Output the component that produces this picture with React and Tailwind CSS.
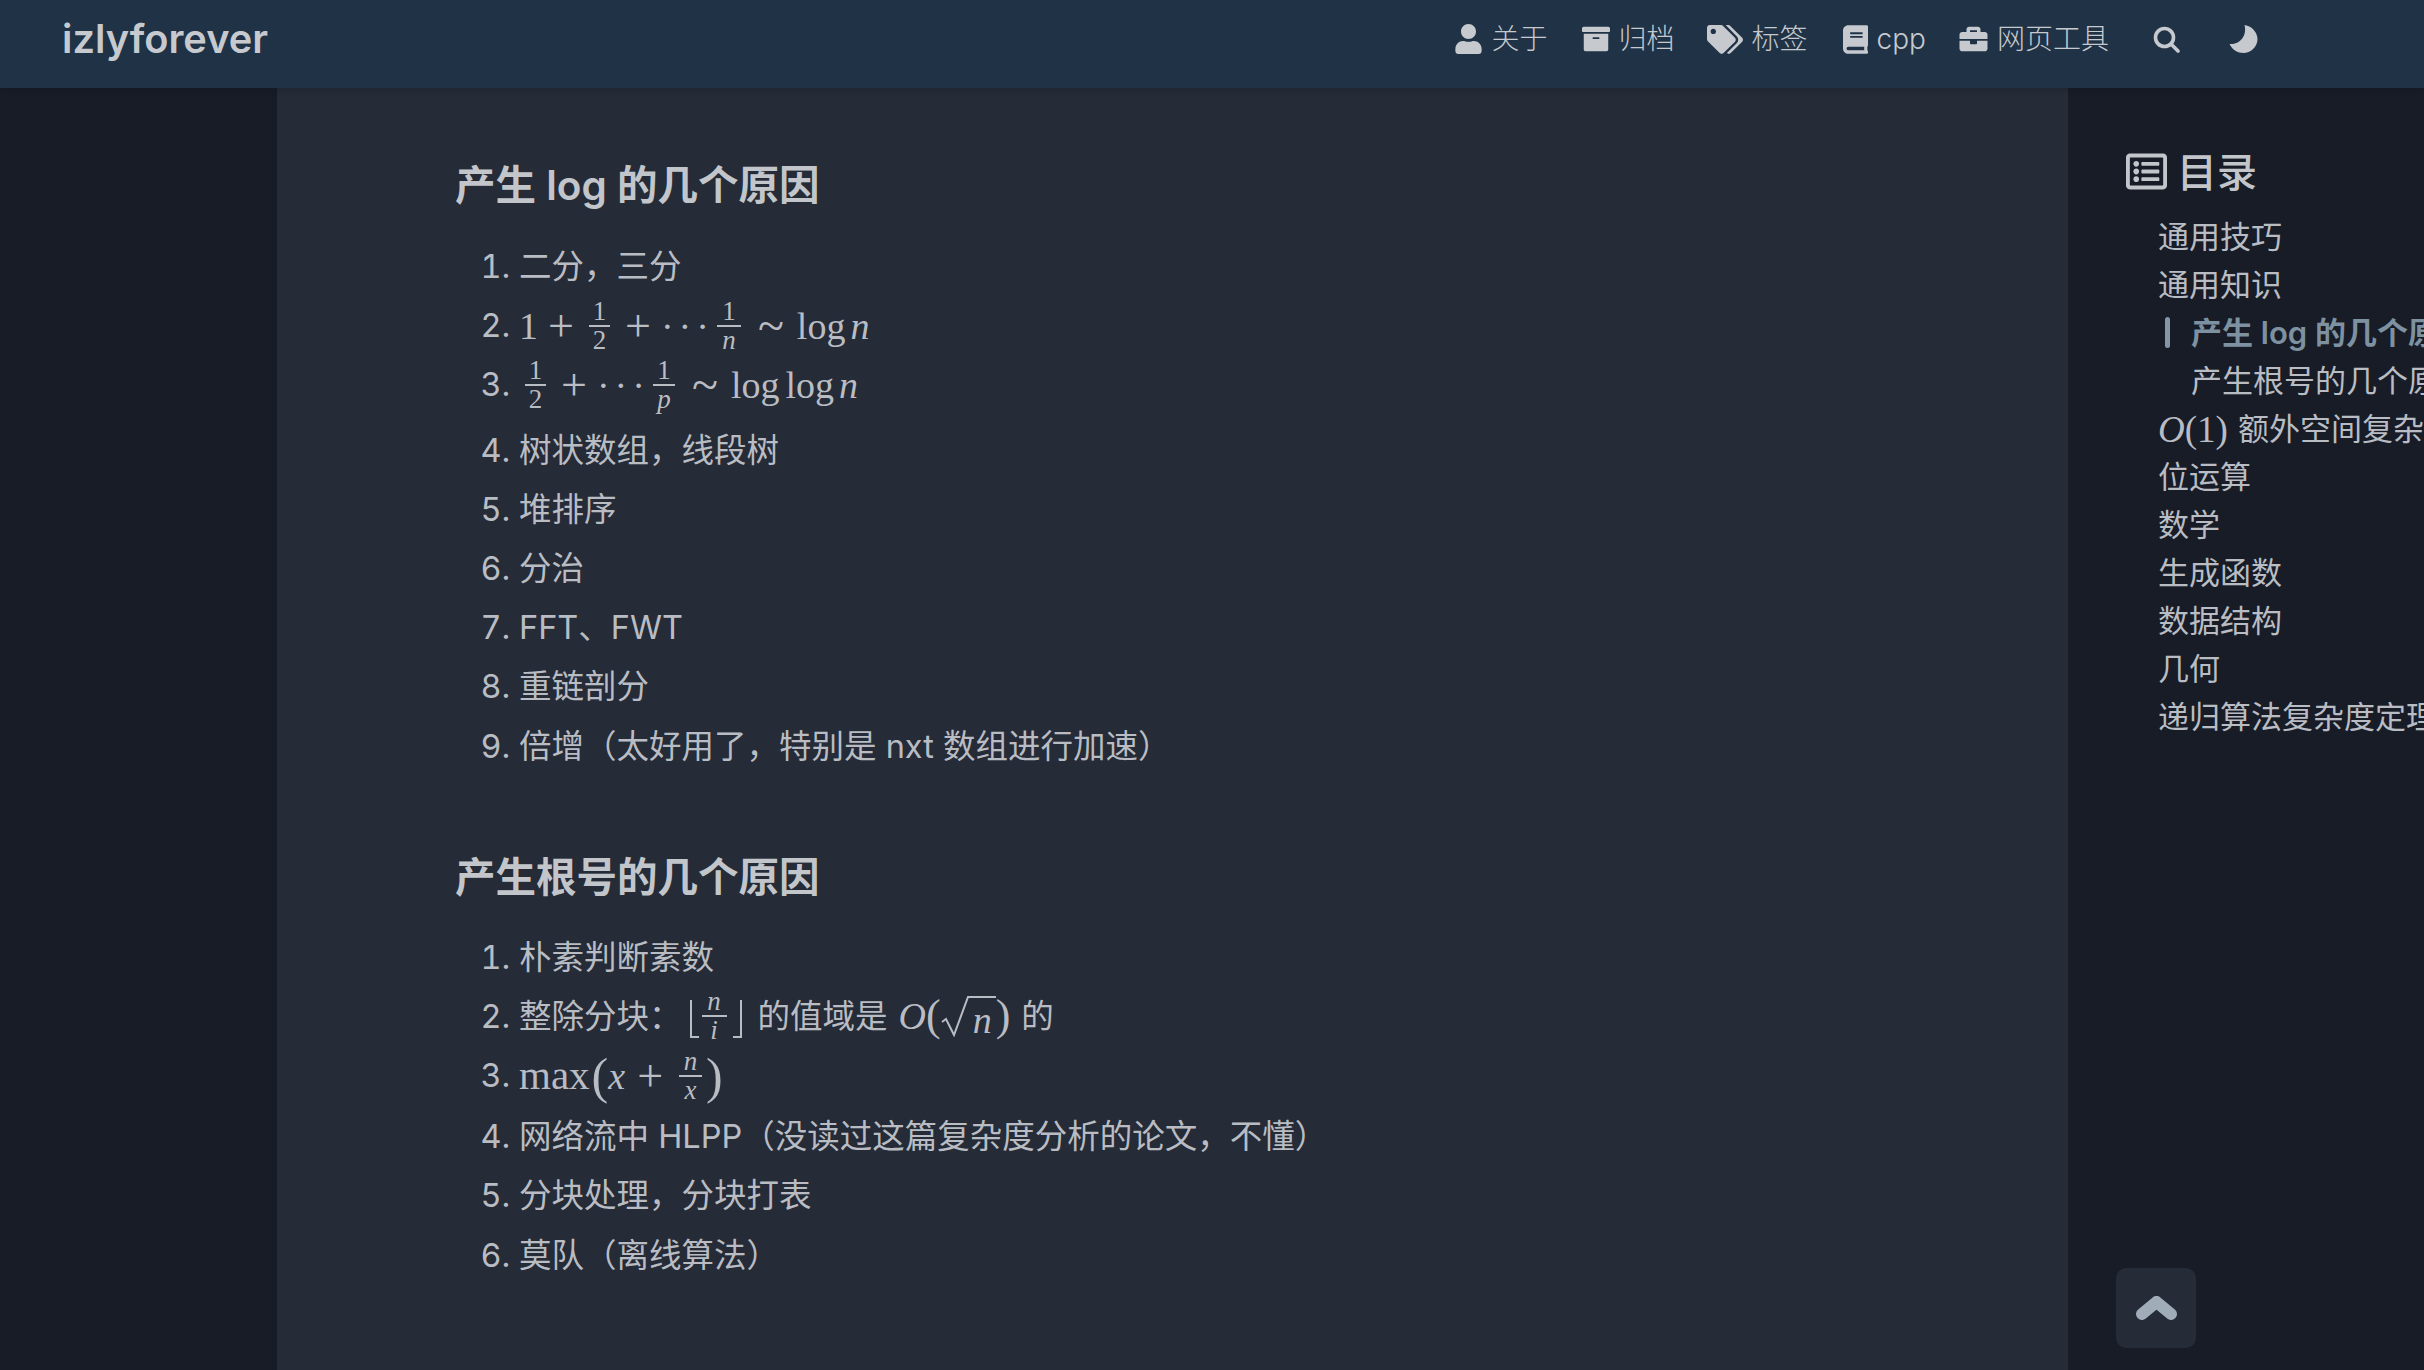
import React from "react";
import { FaUser, FaArchive, FaTags, FaBook, FaBriefcase, FaRegListAlt } from "react-icons/fa";

const SERIF = "font-['Liberation_Serif',serif]";

function M({ children, className = "" }) {
  return <span className={`${SERIF} text-[38px] leading-none ${className}`}>{children}</span>;
}
function I({ children, className = "" }) {
  return <span className={`${SERIF} italic text-[38px] leading-none ${className}`}>{children}</span>;
}
function Plus({ className = "" }) {
  return <span className={`${SERIF} text-[46px] leading-none ${className}`}>+</span>;
}
function Tilde({ className = "" }) {
  return <span className={`${SERIF} text-[48px] leading-none ${className}`}>~</span>;
}
function Dots({ className = "" }) {
  return <span className={`${SERIF} text-[38px] leading-none tracking-[5px] ${className}`}>···</span>;
}
function Frac({ top, bottom, w, italicTop = false, italicBottom = true, className = "" }) {
  return (
    <span className={`inline-flex flex-col items-center align-middle ${SERIF} text-[27px] leading-[27px] ${w} ${className}`}>
      <span className={`h-[27px] ${italicTop ? "italic" : ""}`}>{top}</span>
      <span className="h-[2px] w-full bg-[#b9bdc3]" />
      <span className={`h-[27px] ${italicBottom ? "italic" : ""}`}>{bottom}</span>
    </span>
  );
}
function Row({ children }) {
  return <span className="inline-flex items-center h-[59px] align-top">{children}</span>;
}

function NavItem({ icon, label, className = "" }) {
  return (
    <a className={`flex items-center gap-[9px] ${className}`}>
      {icon}
      <span>{label}</span>
    </a>
  );
}

function Li({ children, className = "" }) {
  return <li className={`h-[59.2px] leading-[59.2px] ${className}`}>{children}</li>;
}

const toc = [
  { t: "通用技巧" },
  { t: "通用知识" },
  { t: "产生 log 的几个原因", nested: true, active: true },
  { t: "产生根号的几个原因", nested: true },
  {
    node: (
      <>
        <span className={`${SERIF} text-[37px] leading-none mr-[10px]`}>
          <i>O</i>(1)
        </span>
        额外空间复杂度
      </>
    ),
  },
  { t: "位运算" },
  { t: "数学" },
  { t: "生成函数" },
  { t: "数据结构" },
  { t: "几何" },
  { t: "递归算法复杂度定理" },
];

export default function App() {
  return (
    <div className="h-screen overflow-hidden flex flex-col bg-[#171c27] text-[#b9bdc3] font-['Inter','Noto_Sans_CJK_SC',sans-serif]">
      <header className="relative z-10 h-[88px] shrink-0 flex items-center justify-between bg-[#1f3246] pb-[10px] pl-[62px] pr-[166px] text-[#c6c9ce] shadow-[0_2px_6px_rgba(0,0,0,0.12)]">
        <span className="text-[39.8px] font-semibold">izlyforever</span>
        <nav className="flex items-center text-[28px] font-light">
          <NavItem icon={<FaUser className="w-[29px] h-[30px]" />} label="关于" />
          <NavItem className="ml-[34px]" icon={<FaArchive className="w-[28px] h-[28px]" />} label="归档" />
          <NavItem className="ml-[32px]" icon={<FaTags className="w-[36px] h-[29px]" />} label="标签" />
          <NavItem className="ml-[35px]" icon={<FaBook className="w-[25px] h-[29px]" />} label="cpp" />
          <NavItem className="ml-[33px]" icon={<FaBriefcase className="w-[29px] h-[28px]" />} label="网页工具" />
          <svg viewBox="0 0 27 27" className="ml-[44px] w-[27px] h-[27px]" fill="none" stroke="currentColor" strokeLinecap="round">
            <circle cx="11.5" cy="11.5" r="9" strokeWidth="3.6" />
            <path d="M18.5 18.5 L25 25" strokeWidth="3.6" />
          </svg>
          <svg viewBox="0 0 28 28" className="ml-[49px] w-[29px] h-[28px]" fill="currentColor">
            <path d="M15 0 C23 1 28 8 28 14 C28 22 21 28 14 28 C8 28 3 25 0 19 C9 20 18 12 15 0Z" />
          </svg>
        </nav>
      </header>

      <div className="flex-1 min-h-0 flex">
        <div className="w-[277px] shrink-0" />
        <main className="w-[1791px] shrink-0 bg-[#252b37] pl-[178px] pt-[70px] text-[32.5px] font-normal">
          <h2 className="h-[56px] leading-[56px] text-[40.5px] font-semibold text-[#c2c6cb]">产生 log 的几个原因</h2>
          <ol className="mt-[23px] list-decimal pl-[64px]">
            <Li>二分，三分</Li>
            <Li>
              <Row>
                <M>1</M>
                <Plus className="ml-[10px]" />
                <Frac top="1" bottom="2" italicBottom={false} w="w-[21px]" className="ml-[15px]" />
                <Plus className="ml-[15px]" />
                <Dots className="ml-[10px]" />
                <Frac top="1" bottom="n" w="w-[24px]" className="ml-[3px]" />
                <Tilde className="ml-[17px]" />
                <M className="ml-[13px] text-[37px]">log</M>
                <I className="ml-[5px]">n</I>
              </Row>
            </Li>
            <Li className="mb-[6px]">
              <Row>
                <Frac top="1" bottom="2" italicBottom={false} w="w-[21px]" className="ml-[6px]" />
                <Plus className="ml-[15px]" />
                <Dots className="ml-[10px]" />
                <Frac top="1" bottom="p" w="w-[22px]" className="ml-[3px]" />
                <Tilde className="ml-[17px]" />
                <M className="ml-[13px] text-[37px]">log</M>
                <M className="ml-[6px] text-[37px]">log</M>
                <I className="ml-[5px]">n</I>
              </Row>
            </Li>
            <Li>树状数组，线段树</Li>
            <Li>堆排序</Li>
            <Li>分治</Li>
            <Li>FFT、FWT</Li>
            <Li>重链剖分</Li>
            <Li>倍增（太好用了，特别是 nxt 数组进行加速）</Li>
          </ol>

          <h2 className="mt-[74px] h-[56px] leading-[56px] text-[40.5px] font-semibold text-[#c2c6cb]">产生根号的几个原因</h2>
          <ol className="mt-[22px] list-decimal pl-[64px]">
            <Li>朴素判断素数</Li>
            <Li>
              <Row>
                <span>整除分块：</span>
                <span className="ml-[8px] w-[9px] h-[38px] mt-[6px] border-l-2 border-b-2 border-[#b9bdc3]" />
                <Frac top="n" bottom="i" italicTop w="w-[25px]" className="ml-[3px]" />
                <span className="ml-[6px] w-[9px] h-[38px] mt-[6px] border-r-2 border-b-2 border-[#b9bdc3]" />
                <span className="ml-[16px]">的值域是</span>
                <I className="ml-[11px]">O</I>
                <M className="text-[44px]">(</M>
                <span className="relative shrink-0 w-[55px] h-[42px]">
                  <svg viewBox="0 0 55 42" className="w-[55px] h-[42px]" fill="none" stroke="#b9bdc3" strokeWidth="2">
                    <path d="M1 27 L5 24 L13 40 L27 2 L55 2" />
                  </svg>
                  <I className="absolute left-[32px] top-[6px]">n</I>
                </span>
                <M className="text-[44px]">)</M>
                <span className="ml-[11px]">的</span>
              </Row>
            </Li>
            <Li className="mb-[2px]">
              <Row>
                <M className="text-[41px]">max</M>
                <M className="ml-[2px] text-[50px]">(</M>
                <I>x</I>
                <Plus className="ml-[12px]" />
                <Frac top="n" bottom="x" italicTop w="w-[23px]" className="ml-[16px]" />
                <M className="ml-[4px] text-[50px]">)</M>
              </Row>
            </Li>
            <Li>网络流中 HLPP（没读过这篇复杂度分析的论文，不懂）</Li>
            <Li>分块处理，分块打表</Li>
            <Li>莫队（离线算法）</Li>
          </ol>
        </main>

        <aside className="flex-1 min-w-0 overflow-hidden pl-[58px] pt-[56px] whitespace-nowrap font-normal">
          <div className="h-[54px] flex items-center gap-[10px] text-[40px] font-medium text-[#c2c6cb]">
            <FaRegListAlt className="w-[41px] h-[41px] shrink-0" />
            <span className="pt-[3px]">目录</span>
          </div>
          <ul className="mt-[15px] pl-[32px] text-[31px]">
            {toc.map((it, i) => (
              <li
                key={i}
                className={`relative h-[48px] leading-[48px] flex items-center ${it.nested ? "pl-[33px]" : ""} ${
                  it.active ? "font-semibold text-[#7e91a1]" : ""
                }`}
              >
                {it.active && <span className="absolute left-[7px] top-[8px] w-[5px] h-[31px] rounded-sm bg-[#8496a6]" />}
                {it.t ? it.t : it.node}
              </li>
            ))}
          </ul>
        </aside>
      </div>

      <button className="fixed right-[228px] bottom-[22px] w-[80px] h-[80px] rounded-[10px] bg-[#252b37] flex items-center justify-center text-[#a0adb9]">
        <svg viewBox="0 0 41 24" className="w-[41px] h-[24px]" fill="none" stroke="currentColor" strokeWidth="12" strokeLinecap="round" strokeLinejoin="round">
          <path d="M6 18 L20.5 6 L35 18" />
        </svg>
      </button>
    </div>
  );
}
